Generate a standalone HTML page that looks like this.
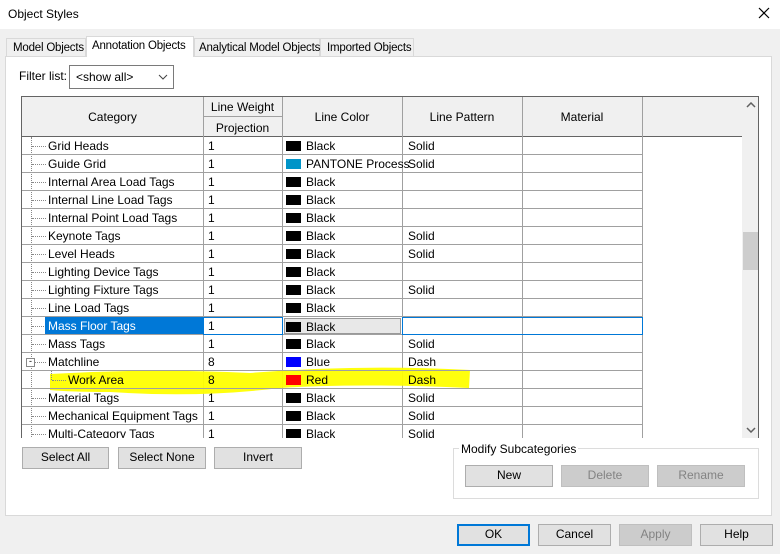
<!DOCTYPE html><html><head><style>
*{box-sizing:border-box}
body{margin:0;width:780px;height:554px;background:#f0f0f0;font-family:"Liberation Sans",sans-serif;font-size:12px;color:#000;position:relative;overflow:hidden}
.a{position:absolute;white-space:nowrap}
.btn{position:absolute;background:#e1e1e1;border:1px solid #adadad;text-align:center;line-height:19px;font-size:12px}
.dis{background:#cccccc;border-color:#bfbfbf;color:#838383}
.row{position:absolute;left:22px;width:620px;height:18px;border-bottom:1px solid #a0a0a0}
.c{position:absolute;top:1px;height:17px;line-height:17px;white-space:nowrap;overflow:hidden}
.sw{display:inline-block;width:15px;height:10px;background:#000;vertical-align:-1px;margin-right:5px}
.dot{position:absolute;top:9px;border-top:1px dotted #888;height:0}
.tab{font-size:11.5px;letter-spacing:-0.2px}
</style></head><body>
<div class="a" style="left:0;top:0;width:780px;height:29px;background:#fff"></div>
<div class="a" style="left:8px;top:7px;font-size:12px">Object Styles</div>
<svg class="a" style="left:758px;top:7px" width="12" height="12"><path d="M1 1L11 11M11 1L1 11" stroke="#000" stroke-width="1.2"/></svg>
<!-- tabs -->
<div class="a tab" style="left:6px;top:38px;width:80px;height:19px;border:1px solid #d9d9d9;border-bottom:none;background:#f0f0f0;line-height:18px;padding-left:6px">Model Objects</div>
<div class="a tab" style="left:86px;top:36px;width:108px;height:21px;border:1px solid #d9d9d9;border-bottom:none;background:#fff;line-height:19px;padding-left:5px;z-index:2">Annotation Objects</div>
<div class="a tab" style="left:194px;top:38px;width:126px;height:19px;border:1px solid #d9d9d9;border-bottom:none;line-height:18px;padding-left:4px">Analytical Model Objects</div>
<div class="a tab" style="left:320px;top:38px;width:94px;height:19px;border:1px solid #d9d9d9;border-bottom:none;line-height:18px;padding-left:6px">Imported Objects</div>
<div class="a" style="left:5px;top:56px;width:767px;height:460px;background:#fff;border:1px solid #d9d9d9"></div>
<div class="a" style="left:19px;top:69px">Filter list:</div>
<div class="a" style="left:69px;top:65px;width:105px;height:24px;border:1px solid #7a7a7a;line-height:22px;padding-left:6px">&lt;show all&gt;</div>
<svg class="a" style="left:158px;top:74px" width="10" height="6"><path d="M1 1L5 5L9 1" stroke="#444" fill="none"/></svg>
<!-- grid -->
<div class="a" style="left:21px;top:96px;width:738px;height:342px;border:1px solid #646464;border-bottom:none;background:#fff;overflow:hidden">
<div class="a" style="left:0;top:0;width:720px;height:40px;background:#f0f0f0;border-bottom:1px solid #646464"></div>
<div class="a" style="left:181px;top:0;width:1px;height:342px;background:#a0a0a0"></div>
<div class="a" style="left:260px;top:0;width:1px;height:342px;background:#a0a0a0"></div>
<div class="a" style="left:380px;top:0;width:1px;height:342px;background:#a0a0a0"></div>
<div class="a" style="left:500px;top:0;width:1px;height:342px;background:#a0a0a0"></div>
<div class="a" style="left:620px;top:0;width:1px;height:342px;background:#a0a0a0"></div>
<div class="a" style="left:181px;top:19px;width:79px;height:1px;background:#a0a0a0"></div>
<div class="a" style="left:0;top:13px;width:181px;text-align:center">Category</div>
<div class="a" style="left:181px;top:3px;width:79px;text-align:center">Line Weight</div>
<div class="a" style="left:181px;top:24px;width:79px;text-align:center">Projection</div>
<div class="a" style="left:260px;top:13px;width:120px;text-align:center">Line Color</div>
<div class="a" style="left:380px;top:13px;width:120px;text-align:center">Line Pattern</div>
<div class="a" style="left:500px;top:13px;width:120px;text-align:center">Material</div>
<div class="a" style="left:720px;top:0;width:17px;height:342px;background:#f0f0f0"></div>
<svg class="a" style="left:724px;top:5px" width="10" height="6"><path d="M1 5L5 1L9 5" stroke="#606060" stroke-width="1.5" fill="none"/></svg>
<div class="a" style="left:721px;top:135px;width:15px;height:38px;background:#cdcdcd"></div>
<svg class="a" style="left:724px;top:330px" width="10" height="6"><path d="M1 1L5 5L9 1" stroke="#606060" stroke-width="1.5" fill="none"/></svg>
<div class="a" style="left:9px;top:40px;height:302px;border-left:1px dotted #888"></div>
</div>
<!-- yellow highlight -->
<svg class="a" style="left:0;top:0" width="780" height="554"><path d="M50 374 Q150 368 250 373 Q360 364 470 370 L469 388 Q360 383 280 388 Q200 398 110 392 Q70 392 50 390Z" fill="#ffff00" opacity="0.95"/></svg>
<div id="rows"></div>
<script>
var d=[["Grid Heads","1","#000","Black","Solid"],["Guide Grid","1","#0094c8","PANTONE Process","Solid"],["Internal Area Load Tags","1","#000","Black",""],["Internal Line Load Tags","1","#000","Black",""],["Internal Point Load Tags","1","#000","Black",""],["Keynote Tags","1","#000","Black","Solid"],["Level Heads","1","#000","Black","Solid"],["Lighting Device Tags","1","#000","Black",""],["Lighting Fixture Tags","1","#000","Black","Solid"],["Line Load Tags","1","#000","Black",""],["Mass Floor Tags","1","#000","Black",""],["Mass Tags","1","#000","Black","Solid"],["Matchline","8","#0000ff","Blue","Dash"],["Work Area","8","#ff0000","Red","Dash"],["Material Tags","1","#000","Black","Solid"],["Mechanical Equipment Tags","1","#000","Black","Solid"],["Multi-Category Tags","1","#000","Black","Solid"]];
var h="";
d.forEach(function(r,i){var t=137+i*18;var sel=i==10,sub=i==13;
var tx=sub?68:48;
h+='<div class="row" style="top:'+t+'px;'+(t+18>438?'height:'+(438-t)+'px;overflow:hidden;border:none;':'')+'">';
h+='<div class="dot" style="left:'+(sub?30:10)+'px;width:14px"></div>';
if(sub)h+='<div class="a" style="left:29px;top:0;height:9px;border-left:1px dotted #888"></div>';
if(i==12)h+='<div class="a" style="left:4px;top:5px;width:9px;height:9px;border:1px solid #888;background:#fff;line-height:5px;font-size:9px;text-align:center">-</div>';
if(sel)h+='<div class="a" style="left:23px;top:0;width:158px;height:17px;background:#0078d7"></div><div class="a" style="left:181px;top:0;width:80px;height:18px;border:1px solid #0078d7"></div><div class="a" style="left:262px;top:1px;width:117px;height:16px;background:#e8e8e8;border:1px solid #999"></div><div class="a" style="left:380px;top:0;width:241px;height:18px;border:1px solid #0078d7"></div>';
h+='<div class="c" style="left:'+(tx-22)+'px;'+(sel?'color:#fff':'')+'">'+r[0]+'</div>';
h+='<div class="c" style="left:186px">'+r[1]+'</div>';
h+='<div class="c" style="left:264px;'+(sel?'top:2px':'')+'"><span class="sw" style="background:'+r[2]+'"></span>'+r[3]+'</div>';
h+='<div class="c" style="left:386px">'+r[4]+'</div></div>';});
document.getElementById("rows").innerHTML=h;
</script>
<div class="btn" style="left:22px;top:447px;width:87px;height:22px">Select All</div>
<div class="btn" style="left:118px;top:447px;width:88px;height:22px">Select None</div>
<div class="btn" style="left:214px;top:447px;width:88px;height:22px">Invert</div>
<div class="a" style="left:453px;top:448px;width:306px;height:51px;border:1px solid #dcdcdc"></div>
<div class="a" style="left:459px;top:442px;background:#fff;padding:0 2px">Modify Subcategories</div>
<div class="btn" style="left:465px;top:465px;width:88px;height:22px">New</div>
<div class="btn dis" style="left:561px;top:465px;width:88px;height:22px">Delete</div>
<div class="btn dis" style="left:657px;top:465px;width:88px;height:22px">Rename</div>
<div class="btn" style="left:457px;top:524px;width:73px;height:22px;border:2px solid #0078d7;line-height:17px">OK</div>
<div class="btn" style="left:538px;top:524px;width:73px;height:22px">Cancel</div>
<div class="btn dis" style="left:619px;top:524px;width:73px;height:22px">Apply</div>
<div class="btn" style="left:700px;top:524px;width:73px;height:22px">Help</div>
</body></html>
